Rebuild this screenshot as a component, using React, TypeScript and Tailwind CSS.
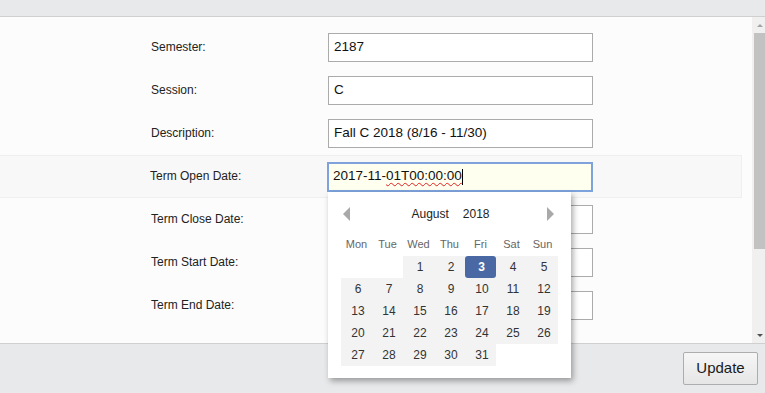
import React from "react";

const fields = [
  { label: "Semester:", value: "2187" },
  { label: "Session:", value: "C" },
  { label: "Description:", value: "Fall C 2018 (8/16 - 11/30)" },
  { label: "Term Open Date:", value: "2017-11-01T00:00:00", active: true },
  { label: "Term Close Date:", value: "" },
  { label: "Term Start Date:", value: "" },
  { label: "Term End Date:", value: "" },
];

const dayNames = ["Mon", "Tue", "Wed", "Thu", "Fri", "Sat", "Sun"];

// August 2018 starts on a Wednesday
const cells: (number | null)[] = [null, null, ...Array.from({ length: 31 }, (_, i) => i + 1), null, null];

function DatePicker() {
  return (
    <div className="absolute left-px top-full z-10 w-[243px] h-[186px] bg-white shadow-[2px_3px_6px_rgba(0,0,0,0.35)] px-[13px]">
      {/* Header */}
      <div className="flex items-center justify-between h-[41px] pt-[3px]">
        <span className="w-0 h-0 ml-[2px] border-y-[7px] border-y-transparent border-r-[7px] border-r-[#a9a9a9]" />
        <div className="flex gap-[14px] text-[12px] text-[#222] ml-[4px]">
          <span>August</span>
          <span>2018</span>
        </div>
        <span className="w-0 h-0 mr-[4px] border-y-[7px] border-y-transparent border-l-[7px] border-l-[#a9a9a9]" />
      </div>
      {/* Day names */}
      <div className="grid grid-cols-7 h-[23px] items-center text-[11px] text-[#666]">
        {dayNames.map((d) => (
          <div key={d} className="text-center">
            {d}
          </div>
        ))}
      </div>
      {/* Days */}
      <div className="grid grid-cols-7">
        {cells.map((d, i) =>
          d === null ? (
            <div key={i} className="h-[22px]" />
          ) : d === 3 ? (
            <div key={i} className="h-[22px] bg-[#f3f3f3]">
              <div className="h-full flex items-center justify-center pl-[2px] pt-px bg-[#4a69a4] rounded-[3px] text-white font-bold text-[12px]">
                {d}
              </div>
            </div>
          ) : (
            <div
              key={i}
              className="h-[22px] flex items-center justify-center pl-[3px] pt-px bg-[#f3f3f3] text-[12px] text-[#333]"
            >
              {d}
            </div>
          )
        )}
      </div>
    </div>
  );
}

export default function App() {
  return (
    <div className="w-[765px] h-[393px] flex flex-col overflow-hidden bg-[#e8e9ea] font-['Liberation_Sans',Arial,sans-serif]">
      {/* Top bar */}
      <div className="h-[17px] shrink-0 bg-[#e8e9ea] border-b border-[#cfcfcf]" />

      {/* Content + scrollbar */}
      <div className="flex flex-1 min-h-0 bg-[#fcfcfc]">
        <div className="flex-1 pt-[9px] pr-[10px]">
          {fields.map((f) => (
            <div
              key={f.label}
              className={
                f.active
                  ? "flex items-center h-[43px] bg-[#f8f8f8] border border-[#efefef] border-l-0"
                  : "flex items-center h-[43px] border border-transparent"
              }
            >
              <div className="w-[327px] pl-[150px] pb-[2px] text-[12px] text-[#222]">{f.label}</div>
              {f.active ? (
                <div className="relative">
                  <div className="w-[266px] h-[30px] flex items-center px-[4px] bg-[#fffff0] border-2 border-[#7da2dc] text-[13.5px] text-[#111]">
                    <span>2017-11-</span>
                    <span className="underline decoration-wavy decoration-[#e02020] decoration-1 underline-offset-2">
                      01T00:00:00
                    </span>
                    <span className="w-px h-[16px] bg-black" />
                  </div>
                  <DatePicker />
                </div>
              ) : (
                <div className="w-[265px] h-[29px] flex items-center px-[5px] bg-white border border-[#ababab] text-[13.5px] text-[#111]">
                  {f.value}
                </div>
              )}
            </div>
          ))}
        </div>

        {/* Scrollbar */}
        <div className="w-[13px] shrink-0 bg-[#f0f0f0] flex flex-col items-end">
          <div className="h-[16px] w-full flex items-center justify-center pl-[2px]">
            <span className="w-0 h-0 border-x-[3px] border-x-transparent border-b-[3px] border-b-[#a3a3a3]" />
          </div>
          <div className="w-[11px] h-[216px] bg-[#c2c2c2]" />
          <div className="flex-1" />
          <div className="h-[16px] w-full flex items-center justify-center pl-[2px]">
            <span className="w-0 h-0 border-x-[3px] border-x-transparent border-t-[3px] border-t-[#505050]" />
          </div>
        </div>
      </div>

      {/* Bottom bar */}
      <div className="h-[50px] shrink-0 bg-[#e8e9ea] border-t border-[#cfcfcf] flex items-start justify-end pt-[8px] pr-[7px]">
        <button className="w-[75px] h-[33px] rounded-[2px] border border-[#adadad] bg-gradient-to-b from-[#f6f6f6] to-[#e6e6e6] text-[15px] text-[#1a1a1a]">
          Update
        </button>
      </div>
    </div>
  );
}
